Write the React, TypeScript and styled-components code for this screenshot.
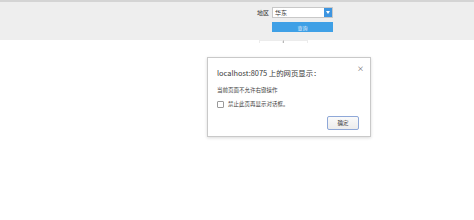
import React from "react";
import styled, { createGlobalStyle } from "styled-components";

const GlobalStyle = createGlobalStyle`
  html, body {
    margin: 0;
    padding: 0;
    background: #ffffff;
    font-family: "Microsoft YaHei", "Noto Sans CJK SC", "Liberation Sans", sans-serif;
  }
`;

const Page = styled.div`
  position: relative;
  width: 474px;
  height: 220px;
  overflow: hidden;
  background: #ffffff;
`;

const SearchBar = styled.div`
  height: 33px;
  border-top: 2px solid #d4d4d4;
  background: #eeeeee;
  display: flex;
  flex-direction: column;
  padding-left: 257px;
  padding-top: 5px;
  gap: 4px;
  box-sizing: content-box;
`;

const Row = styled.div`
  display: flex;
  align-items: center;
  gap: 3px;
`;

const Label = styled.span`
  font-size: 6px;
  color: #333;
  width: 12px;
`;

const Select = styled.div`
  width: 61px;
  height: 11px;
  box-sizing: border-box;
  border: 1px solid #c8c8c8;
  background: #fff;
  display: flex;
  align-items: center;
  justify-content: space-between;
  font-size: 6px;
  color: #333;
  padding-left: 2px;
`;

const Arrow = styled.span`
  width: 8px;
  height: 9px;
  background: #3d95e0;
  display: flex;
  align-items: center;
  justify-content: center;
`;

const QueryButton = styled.button`
  margin-left: 15px;
  width: 61px;
  height: 10px;
  border: none;
  padding: 0;
  background: #3fa0e6;
  color: #e8f3fc;
  font-size: 5px;
  font-family: inherit;
`;

const Tabs = styled.div`
  display: flex;
  margin-left: 259px;
`;

const Tab = styled.div<{ $w: number }>`
  width: ${(p) => p.$w}px;
  height: 2px;
  border: 1px solid #ececec;
  border-bottom: none;
  border-left-color: ${(p) => (p.$w > 22 ? "#b8b8b8" : "#ececec")};
`;

const Dialog = styled.div`
  position: absolute;
  left: 207px;
  top: 57px;
  width: 164px;
  height: 80px;
  box-sizing: border-box;
  background: #fff;
  border: 1px solid #c9c9c9;
  box-shadow: 0 1px 3px rgba(0, 0, 0, 0.15);
  display: flex;
  flex-direction: column;
  padding: 7px 10px 0 9px;
`;

const TitleRow = styled.div`
  display: flex;
  justify-content: space-between;
  align-items: flex-start;
`;

const Title = styled.div`
  font-size: 7.4px;
  color: #3a3a3a;
  margin-top: 2px;
  white-space: nowrap;
`;

const Close = styled.span`
  font-size: 7px;
  color: #555;
  margin-right: -4px;
  line-height: 1;
`;

const Message = styled.div`
  font-size: 5.5px;
  color: #444;
  margin-top: 8px;
`;

const CheckRow = styled.label`
  display: flex;
  align-items: center;
  gap: 4px;
  margin-top: 6px;
  font-size: 5.5px;
  color: #444;
`;

const Box = styled.span`
  width: 5px;
  height: 5px;
  border: 1px solid #9a9a9a;
  border-radius: 1px;
  background: #fff;
`;

const Footer = styled.div`
  display: flex;
  justify-content: flex-end;
  margin-top: 8px;
  margin-right: 1px;
`;

const OkButton = styled.button`
  width: 32px;
  height: 14px;
  padding: 0;
  border: 1px solid #8fa8d8;
  border-radius: 2px;
  background: linear-gradient(#fafafa, #ececec);
  font-size: 5.5px;
  color: #333;
  font-family: inherit;
`;

export default function App() {
  return (
    <Page>
      <GlobalStyle />
      <SearchBar>
        <Row>
          <Label>地区</Label>
          <Select>
            <span>华东</span>
            <Arrow>
              <svg width="4" height="3" viewBox="0 0 4 3">
                <path d="M0 0 L4 0 L2 3 Z" fill="#fff" />
              </svg>
            </Arrow>
          </Select>
        </Row>
        <QueryButton>查询</QueryButton>
      </SearchBar>
      <Tabs>
        <Tab $w={22} />
        <Tab $w={23} />
      </Tabs>
      <Dialog>
        <TitleRow>
          <Title>localhost:8075 上的网页显示：</Title>
          <Close>×</Close>
        </TitleRow>
        <Message>当前页面不允许右键操作</Message>
        <CheckRow>
          <Box />
          <span>禁止此页再显示对话框。</span>
        </CheckRow>
        <Footer>
          <OkButton>确定</OkButton>
        </Footer>
      </Dialog>
    </Page>
  );
}
